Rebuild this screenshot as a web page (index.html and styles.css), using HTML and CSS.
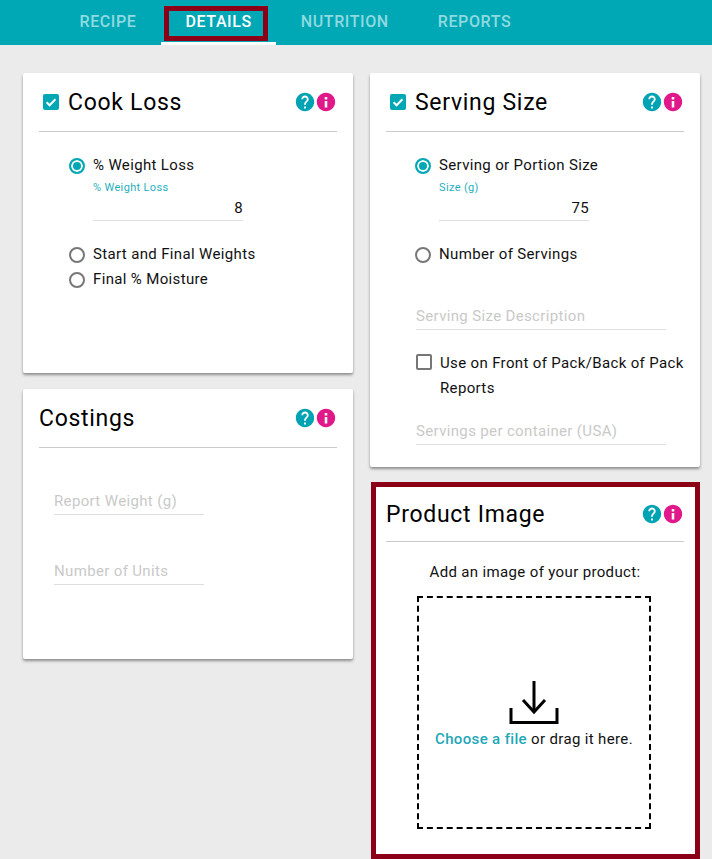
FILE: index.html
```html
<!DOCTYPE html>
<html lang="en">
<head>
<meta charset="utf-8">
<title>Recipe details</title>
<link rel="stylesheet" href="styles.css">
</head>
<body>
<svg class="defs" width="0" height="0" aria-hidden="true">
  <symbol id="help" viewBox="0 0 24 24"><path d="M12 2C6.48 2 2 6.48 2 12s4.48 10 10 10 10-4.48 10-10S17.52 2 12 2zm1 17h-2v-2h2v2zm2.07-7.75l-.9.92C13.45 12.9 13 13.5 13 15h-2v-.5c0-1.1.45-2.1 1.17-2.83l1.24-1.26c.37-.36.59-.86.59-1.41 0-1.1-.9-2-2-2s-2 .9-2 2H8c0-2.21 1.79-4 4-4s4 1.79 4 4c0 .88-.36 1.68-.93 2.25z"/></symbol>
  <symbol id="info" viewBox="0 0 24 24"><path d="M12 2C6.48 2 2 6.48 2 12s4.48 10 10 10 10-4.48 10-10S17.52 2 12 2zm1.4 16h-2.8v-7h2.8v7zm0-8.6h-2.8V6.6h2.8v2.8z"/></symbol>
  <symbol id="check" viewBox="0 0 16 16"><rect width="16" height="16" rx="2" fill="currentColor"/><path d="M3.6 8.2l3 3 5.8-6" fill="none" stroke="#fff" stroke-width="2"/></symbol>
</svg>

<nav class="tabs">
  <a class="tab">RECIPE</a>
  <a class="tab tab-active">DETAILS<span class="highlight"></span></a>
  <a class="tab">NUTRITION</a>
  <a class="tab">REPORTS</a>
</nav>

<main class="columns">
  <div class="column">
    <section class="card card-cook">
      <header class="card-head">
        <svg class="check"><use href="#check"/></svg>
        <h2 class="card-title">Cook Loss</h2>
        <span class="head-icons">
          <svg class="icon icon-help"><use href="#help"/></svg>
          <svg class="icon icon-info"><use href="#info"/></svg>
        </span>
      </header>
      <div class="options">
        <div class="option"><span class="radio radio-on"></span>% Weight Loss</div>
        <div class="field field-value">
          <span class="field-label">% Weight Loss</span>
          <span class="field-input">8</span>
        </div>
        <div class="option option-after"><span class="radio"></span>Start and Final Weights</div>
        <div class="option"><span class="radio"></span>Final % Moisture</div>
      </div>
    </section>

    <section class="card card-cost">
      <header class="card-head">
        <h2 class="card-title">Costings</h2>
        <span class="head-icons">
          <svg class="icon icon-help"><use href="#help"/></svg>
          <svg class="icon icon-info"><use href="#info"/></svg>
        </span>
      </header>
      <div class="cost-fields">
        <div class="empty-field short">Report Weight (g)</div>
        <div class="empty-field short">Number of Units</div>
      </div>
    </section>
  </div>

  <div class="column">
    <section class="card card-serving">
      <header class="card-head">
        <svg class="check"><use href="#check"/></svg>
        <h2 class="card-title">Serving Size</h2>
        <span class="head-icons">
          <svg class="icon icon-help"><use href="#help"/></svg>
          <svg class="icon icon-info"><use href="#info"/></svg>
        </span>
      </header>
      <div class="options">
        <div class="option"><span class="radio radio-on"></span>Serving or Portion Size</div>
        <div class="field field-value">
          <span class="field-label">Size (g)</span>
          <span class="field-input">75</span>
        </div>
        <div class="option option-after"><span class="radio"></span>Number of Servings</div>
      </div>
      <div class="serving-extra">
        <div class="empty-field wide">Serving Size Description</div>
        <div class="pack-option"><span class="box"></span><span>Use on Front of Pack/Back of Pack Reports</span></div>
        <div class="empty-field wide per-container">Servings per container (USA)</div>
      </div>
    </section>

    <section class="card card-product">
      <header class="card-head">
        <h2 class="card-title">Product Image</h2>
        <span class="head-icons">
          <svg class="icon icon-help"><use href="#help"/></svg>
          <svg class="icon icon-info"><use href="#info"/></svg>
        </span>
      </header>
      <p class="add-text">Add an image of your product:</p>
      <div class="dropzone">
        <svg class="upload" width="50" height="44" viewBox="0 0 50 44" fill="none" stroke="#000" stroke-width="3">
          <path d="M25 1v31"/>
          <path d="M14 20l11 12 11-12"/>
          <path d="M2 28v14.500h46V28"/>
        </svg>
        <p class="drop-text"><strong class="choose">Choose a file</strong> or drag it here.</p>
      </div>
    </section>
  </div>
</main>
</body>
</html>
```

FILE: styles.css
```css
* { box-sizing: border-box; }
html, body { margin: 0; height: 859px; overflow: hidden; }
body {
  background: #ebebeb;
  color: #111;
  font-family: Roboto, "Liberation Sans", sans-serif;
  font-size: 15px;
  letter-spacing: 0.35px;
}
.defs { position: absolute; }

.tabs {
  display: flex;
  height: 45px;
  padding-left: 55px;
  background: #00a8b5;
}
.tab {
  position: relative;
  display: flex;
  align-items: center;
  height: 45px;
  padding: 0 24.5px 2px;
  color: #8fdae0;
  font-size: 16px;
  font-weight: 500;
  letter-spacing: 0.6px;
}
.tab-active { color: #fff; border-bottom: 3px solid #fff; padding-bottom: 0; }
.highlight {
  position: absolute;
  left: 3px;
  top: 6px;
  width: 104px;
  height: 35px;
  border: 5px solid #8b0016;
}

.columns {
  display: flex;
  gap: 17px;
  padding: 28px 12px 0 23px;
}
.column {
  display: flex;
  flex-direction: column;
  gap: 16px;
  width: 330px;
}
.card {
  padding: 0 16px;
  background: #fff;
  border-radius: 2px;
  box-shadow: 0 2px 3px rgba(0, 0, 0, 0.4);
}
.card-cook { height: 300px; }
.card-cost { height: 270px; }
.card-serving { height: 394px; }
.card-product {
  height: 377px;
  margin-left: 1px;
  margin-top: -1px;
  padding: 0 11px 0 10px;
  border: 5px solid #8b0016;
  border-radius: 0;
  box-shadow: none;
}

.card-head {
  display: flex;
  align-items: center;
  height: 59px;
  border-bottom: 1px solid #cbcbcb;
}
.card-product .card-head { height: 55px; }
.check {
  flex: none;
  width: 16px;
  height: 16px;
  margin: 0 9px 0 4px;
  color: #00a8b5;
}
.card-title {
  margin: 0;
  color: #000;
  font-size: 23px;
  font-weight: 400;
  letter-spacing: 0.7px;
}
.head-icons { display: flex; margin-left: auto; }
.icon { display: block; width: 22px; height: 22px; }
.icon + .icon { margin-left: -0.5px; }
.icon-help { fill: #00a3b4; }
.icon-info { fill: #e0188a; }

.options { padding: 21px 0 0 30px; }
.card-serving .options { padding-left: 29px; }
.option {
  display: flex;
  align-items: center;
  height: 25px;
  line-height: 25px;
}
.radio {
  flex: none;
  width: 16px;
  height: 16px;
  margin-right: 8px;
  border: 2px solid #777;
  border-radius: 50%;
}
.radio-on {
  border-color: #00a8b5;
  background: #00a8b5;
  box-shadow: inset 0 0 0 2px #fff;
}
.field {
  width: 150px;
  margin-left: 24px;
}
.field-value { height: 64px; padding-top: 2px; border-bottom: 0; }
.field-label {
  display: block;
  height: 15px;
  color: #1fb0bd;
  font-size: 11px;
  line-height: 15px;
}
.field-input {
  display: block;
  height: 26px;
  padding-top: 3px;
  border-bottom: 1px solid #dedede;
  line-height: 20px;
  text-align: right;
}
.option-after { margin-top: 0; }

.empty-field {
  height: 26px;
  border-bottom: 1px solid #dedede;
  color: #c9c9c9;
  font-size: 15px;
  line-height: 24px;
}
.short { width: 150px; }
.wide { width: 250px; }
.cost-fields {
  display: flex;
  flex-direction: column;
  gap: 44px;
  padding: 41px 0 0 15px;
}
.serving-extra { padding: 37px 0 0 30px; }
.pack-option {
  display: flex;
  align-items: flex-start;
  margin-top: 21px;
  width: 270px;
  line-height: 25px;
}
.box {
  flex: none;
  width: 16px;
  height: 16px;
  margin: 3px 8px 0 0;
  border: 2px solid #777;
  border-radius: 2px;
}
.per-container { margin-top: 18px; }

.add-text {
  margin: 20px 0 14px;
  line-height: 20px;
  text-align: center;
}
.dropzone {
  display: flex;
  flex-direction: column;
  align-items: center;
  width: 234px;
  height: 233px;
  margin-left: 31px;
  padding-top: 82px;
  border: 2px dashed #000;
}
.upload { display: block; }
.drop-text { margin: 4px 0 0; line-height: 22px; white-space: nowrap; }
.choose { color: #1fa8b8; font-weight: 500; }
```
